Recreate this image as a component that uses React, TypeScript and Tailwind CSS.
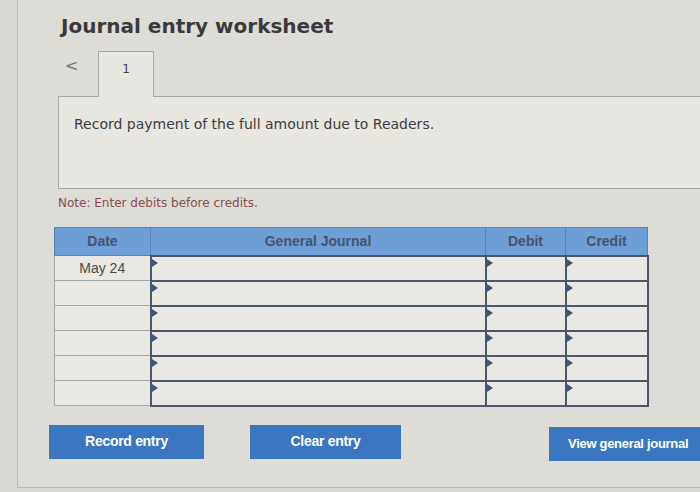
import React from 'react';

const ROWS = ['May 24', '', '', '', '', ''];

function Marker() {
  return (
    <span className="absolute left-0 top-[2px] w-0 h-0 border-t-[4px] border-b-[4px] border-l-[6px] border-t-transparent border-b-transparent border-l-[#3b5683]" />
  );
}

function InputCell() {
  return (
    <td className="relative h-[25px] border-2 border-[#4a566c] bg-[#e9e8e3] p-0">
      <Marker />
    </td>
  );
}

export default function App() {
  return (
    <div className="w-[700px] h-[492px] overflow-hidden bg-[#d9d8d3] font-['DejaVu_Sans',sans-serif]">
      <div className="ml-[17px] h-[488px] border-l border-b border-[#b9b8b3] bg-[#dddcd7] flex flex-col">
        {/* Title */}
        <h1 className="pl-[43px] pt-[12px] text-[20px] leading-[28px] font-bold text-[#3a3a3a]">
          Journal entry worksheet
        </h1>

        {/* Tabs */}
        <div className="mt-[11px] pl-[40px] flex items-end">
          <span className="w-[40px] pl-[7px] pb-[20px] text-[16px] leading-[20px] text-[#777]">&lt;</span>
          <div className="relative z-10 -mb-px w-[56px] h-[46px] border border-b-0 border-[#a9a8a3] bg-[#e7e6e1] flex justify-center pt-[8px]">
            <span className="text-[12px] text-[#444]">1</span>
          </div>
        </div>
        <div className="ml-[40px] h-[93px] border-t border-l border-b border-[#a9a8a3] bg-[#e7e6e1] pl-[15px] pt-[17px]">
          <p className="text-[14px] leading-[20px] text-[#3d3d3d]">
            Record payment of the full amount due to Readers.
          </p>
        </div>

        {/* Note */}
        <p className="ml-[40px] mt-[6px] text-[12px] leading-[16px] text-[#8b4b4e]">
          Note: Enter debits before credits.
        </p>

        {/* Journal table */}
        <table className="ml-[36px] mt-[16px] w-[593px] table-fixed border-collapse font-['Liberation_Sans',Arial,sans-serif]">
          <colgroup>
            <col className="w-[96px]" />
            <col className="w-[335px]" />
            <col className="w-[80px]" />
            <col className="w-[82px]" />
          </colgroup>
          <thead>
            <tr className="h-[28px] bg-[#6d9ed6] text-[14px] font-bold text-[#46556b]">
              <th className="border border-[#5b80b3] font-bold">Date</th>
              <th className="border border-[#5b80b3] font-bold">General Journal</th>
              <th className="border border-[#5b80b3] font-bold">Debit</th>
              <th className="border border-[#5b80b3] font-bold">Credit</th>
            </tr>
          </thead>
          <tbody>
            {ROWS.map((d, i) => (
              <tr key={i}>
                <td className="h-[25px] border border-[#a6a6a4] bg-[#e9e8e3] text-center align-top pt-[2px] text-[14px] text-[#4a4a4a]">
                  {d}
                </td>
                <InputCell />
                <InputCell />
                <InputCell />
              </tr>
            ))}
          </tbody>
        </table>

        {/* Buttons */}
        <div className="mt-[18px] ml-[31px] flex items-start font-['Liberation_Sans',Arial,sans-serif]">
          <button className="shrink-0 w-[155px] h-[34px] bg-[#3b77c0] text-white text-[14px] font-bold tracking-[-0.3px]">
            Record entry
          </button>
          <button className="shrink-0 ml-[46px] w-[151px] h-[34px] bg-[#3b77c0] text-white text-[14px] font-bold tracking-[-0.3px]">
            Clear entry
          </button>
          <button className="shrink-0 ml-[148px] mt-[2px] w-[160px] h-[34px] bg-[#3b77c0] text-white text-[13px] font-bold tracking-[-0.3px] text-left pl-[19px] whitespace-nowrap">
            View general journal
          </button>
        </div>
      </div>
    </div>
  );
}
